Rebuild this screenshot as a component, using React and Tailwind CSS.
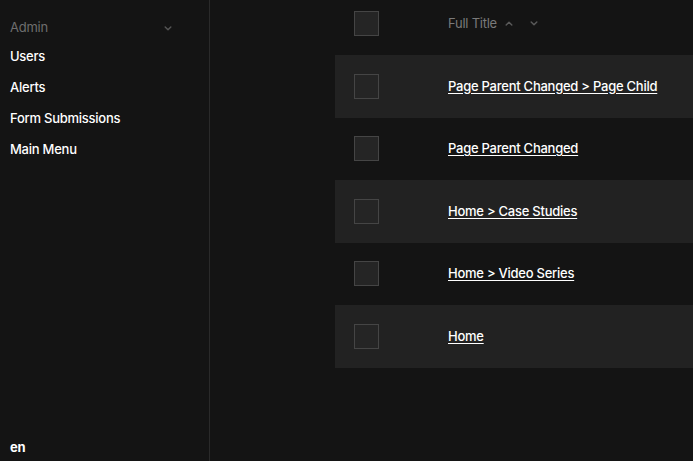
import React from "react";

const rows = [
  "Page Parent Changed > Page Child",
  "Page Parent Changed",
  "Home > Case Studies",
  "Home > Video Series",
  "Home",
];

function Chevron({ up, className }) {
  return (
    <svg viewBox="0 0 10 6" className={className} fill="none" stroke="currentColor" strokeWidth="1.8" strokeLinecap="round" strokeLinejoin="round">
      {up ? <path d="M1.5 5 L5 1.5 L8.5 5" /> : <path d="M1.5 1 L5 4.5 L8.5 1" />}
    </svg>
  );
}

function Box() {
  return <div className="w-[25px] h-[25px] border border-[#454545] bg-[#252525]" />;
}

export default function App() {
  return (
    <div className="flex w-[693px] h-[461px] bg-[#141414] overflow-hidden tracking-[-0.25px]" style={{ fontFamily: "Inter, 'Liberation Sans', sans-serif" }}>
      <aside className="w-[210px] shrink-0 border-r border-[#2a2a2a] flex flex-col justify-between pl-[10px] pr-[37px]">
        <div className="pt-[18px]">
          <div className="flex items-center justify-between h-[20px] text-[13px] text-[#6e6e6e]">
            <span>Admin</span>
            <Chevron className="w-[8px] h-[5px] text-[#555]" />
          </div>
          <nav className="flex flex-col mt-[3px] text-[13px] text-white font-medium">
            <span className="h-[31px] flex items-center">Users</span>
            <span className="h-[31px] flex items-center">Alerts</span>
            <span className="h-[31px] flex items-center">Form Submissions</span>
            <span className="h-[31px] flex items-center">Main Menu</span>
          </nav>
        </div>
        <div className="pb-[4px] text-[13px] font-bold text-white">en</div>
      </aside>
      <main className="flex-1 pl-[125px]">
        <div className="flex items-start h-[55px] pt-[11px]">
          <div className="w-[113px] pl-[19px]"><Box /></div>
          <div className="flex items-center h-[25px] text-[13px] text-[#7a7a7a]">
            <span>Full Title</span>
            <Chevron up className="w-[8px] h-[5px] ml-[8px] text-[#5a5a5a]" />
            <Chevron className="w-[8px] h-[5px] ml-[17px] text-[#5a5a5a]" />
          </div>
        </div>
        {rows.map((t, i) => (
          <div key={t} className={`flex items-center h-[62.5px] ${i % 2 === 0 ? "bg-[#222222]" : ""}`}>
            <div className="w-[113px] pl-[19px]"><Box /></div>
            <a className="text-[13px] text-white font-medium underline underline-offset-2">{t}</a>
          </div>
        ))}
      </main>
    </div>
  );
}
